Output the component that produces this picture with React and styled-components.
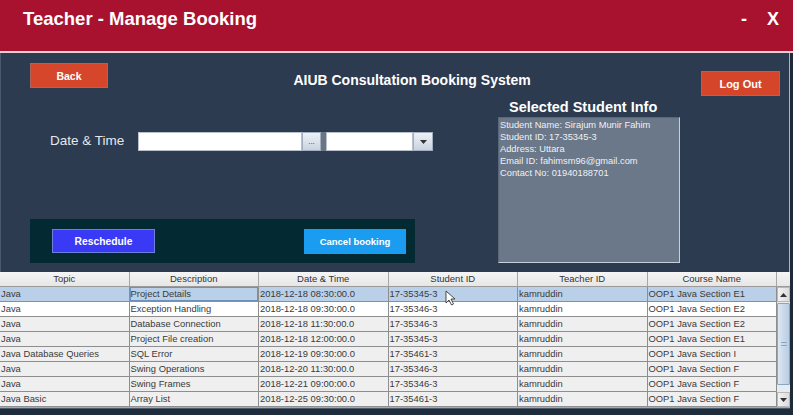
import styled, { createGlobalStyle } from 'styled-components'

const GlobalStyle = createGlobalStyle`
  html, body {
    margin: 0;
    padding: 0;
    background: #2c3b50;
  }
  * {
    box-sizing: border-box;
  }
`

/* --- Window frame --- */
const Frame = styled.div`
  width: 793px;
  height: 415px;
  display: flex;
  flex-direction: column;
  overflow: hidden;
  font-family: 'Liberation Sans', Arial, sans-serif;
  position: relative;
`

const TitleBar = styled.header`
  height: 53px;
  flex: none;
  display: flex;
  align-items: flex-start;
  justify-content: space-between;
  padding: 7px 14px 0 23px;
  background: #a8122f;
  border-bottom: 2px solid #e6cfd5;
  color: #ffffff;
`

const WindowTitle = styled.h1`
  margin: 0;
  font-size: 18.5px;
  font-weight: 700;
  line-height: 24px;
`

const WindowControls = styled.div`
  display: flex;
  gap: 20px;
  font-size: 18px;
  font-weight: 700;
  line-height: 24px;
`

const Body = styled.main`
  flex: 1;
  display: flex;
  flex-direction: column;
  background: #2c3b50;
  padding-right: 3px;
  box-shadow: inset -3px 0 0 #1f2a38, inset -4px 0 0 #a9b4c0, inset 1px 0 0 #4a5a6e;
`

/* --- Top row --- */
const TopRow = styled.div`
  display: flex;
  align-items: flex-start;
  padding: 10px 10px 0 30px;
  height: 44px;
`

const ActionButton = styled.button`
  width: ${(p) => p.$w}px;
  height: ${(p) => p.$h}px;
  margin-top: ${(p) => p.$top || 0}px;
  padding: 0;
  border: 1px solid ${(p) => p.$border};
  background: ${(p) => p.$bg};
  color: #ffffff;
  font-family: 'Liberation Sans', Arial, sans-serif;
  font-weight: 700;
  font-size: ${(p) => p.$size}px;
  cursor: pointer;
`

const AppHeading = styled.h2`
  flex: 1;
  margin: 0;
  margin-top: 8px;
  padding-left: 15px;
  text-align: center;
  color: #ffffff;
  font-size: 14px;
  font-weight: 700;
  line-height: 18px;
`

/* --- Middle area --- */
const MiddleRow = styled.div`
  display: flex;
  padding-left: 30px;
  height: 166px;
`

const LeftColumn = styled.div`
  width: 403px;
  display: flex;
  flex-direction: column;
`

const DateRow = styled.div`
  display: flex;
  align-items: center;
  margin-top: 35px;
  padding-left: 20px;
  height: 19px;
`

const FieldLabel = styled.label`
  width: 88px;
  margin-top: -2px;
  color: #e4e8ee;
  font-size: 13.5px;
`

const TextField = styled.div`
  width: ${(p) => p.$w}px;
  height: 19px;
  background: #ffffff;
  border: 1px solid #b8c0cc;
`

const FieldButton = styled.div`
  width: ${(p) => p.$w}px;
  height: 19px;
  display: flex;
  align-items: center;
  justify-content: center;
  background: linear-gradient(#eef2f7, #c9d3df);
  border: 1px solid #a3afbf;
  color: #333333;
  font-size: 8px;
  line-height: 1;
`

const FieldGap = styled.div`
  width: 5px;
  height: 19px;
  background: #6b7684;
`

const ActionBox = styled.div`
  margin-top: auto;
  width: 385px;
  height: 44px;
  display: flex;
  align-items: flex-start;
  justify-content: space-between;
  padding: 10px 9px 0 22px;
  background: #032a32;
`

const InfoColumn = styled.section`
  margin-left: 65px;
  width: 182px;
  display: flex;
  flex-direction: column;
`

const InfoHeading = styled.h3`
  margin: 0;
  padding-left: 11px;
  color: #ffffff;
  font-size: 14.5px;
  font-weight: 700;
  line-height: 20px;
`

const InfoBox = styled.div`
  flex: 1;
  background: #6a7889;
  border: 1px solid #5a6779;
  border-right-color: #c7d0da;
  border-bottom-color: #c7d0da;
  padding: 1px 1px;
  color: #eef1f5;
  font-size: 9.3px;
  line-height: 12px;
`

/* --- Table --- */
const TableArea = styled.div`
  display: flex;
  margin-top: 9px;
  border-bottom: 1px solid #a8a8a8;
`

const TableGrid = styled.div`
  width: 777px;
  display: grid;
  grid-template-columns: repeat(6, 1fr);
  grid-auto-rows: 15px;
`

const HeaderCell = styled.div`
  background: linear-gradient(#f5f5f5, #e6e6e6);
  border-right: 1px solid #a6a6a6;
  border-bottom: 1px solid #9a9a9a;
  text-align: center;
  color: #333333;
  font-size: 9.5px;
  line-height: 14px;
`

const Cell = styled.div`
  background: ${(p) => p.$bg};
  border-right: 1px solid #8e8e8e;
  border-bottom: 1px solid #8e8e8e;
  padding-left: 1px;
  color: #3a3a3a;
  font-size: 9.4px;
  line-height: 14px;
  white-space: nowrap;
  overflow: hidden;
  ${(p) => p.$focus && 'box-shadow: inset 0 0 0 1px #6f8fbf;'}
`

const ScrollColumn = styled.div`
  width: 13px;
  display: flex;
  flex-direction: column;
  background: #eeeeee;
`

const ScrollCorner = styled.div`
  height: 15px;
  background: linear-gradient(#f5f5f5, #e6e6e6);
  border-bottom: 1px solid #9a9a9a;
`

const ScrollArrow = styled.div`
  height: 15px;
  display: flex;
  align-items: center;
  justify-content: center;
  background: linear-gradient(90deg, #f2f2f2, #dcdcdc);
  border: 1px solid #b8b8b8;
`

const ScrollTrack = styled.div`
  flex: 1;
  display: flex;
  flex-direction: column;
  padding: 1px 0 7px;
  background: #e8ecf0;
`

const ScrollThumb = styled.div`
  flex: 1;
  display: flex;
  align-items: center;
  justify-content: center;
  background: linear-gradient(90deg, #dbe6f2, #b9cde3);
  border: 1px solid #8aa5c6;
  border-radius: 1px;
`

const Grip = styled.div`
  width: 6px;
  height: 4px;
  border-top: 1px solid #8aa5c6;
  border-bottom: 1px solid #8aa5c6;
`

const BottomStrip = styled.div`
  flex: 1;
  border-top: 1px solid #4b5a6c;
  background: #1f2c3b;
`

const Cursor = styled.svg`
  position: absolute;
  left: 445px;
  top: 290px;
  width: 11px;
  height: 16px;
`

const headers = ['Topic', 'Description', 'Date & Time', 'Student ID', 'Teacher ID', 'Course Name']

const bookings = [
  ['Java', 'Project Details', '2018-12-18 08:30:00.0', '17-35345-3', 'kamruddin', 'OOP1 Java Section E1'],
  ['Java', 'Exception Handling', '2018-12-18 09:30:00.0', '17-35346-3', 'kamruddin', 'OOP1 Java Section E2'],
  ['Java', 'Database Connection', '2018-12-18 11:30:00.0', '17-35346-3', 'kamruddin', 'OOP1 Java Section E2'],
  ['Java', 'Project File creation', '2018-12-18 12:00:00.0', '17-35345-3', 'kamruddin', 'OOP1 Java Section E1'],
  ['Java Database Queries', 'SQL Error', '2018-12-19 09:30:00.0', '17-35461-3', 'kamruddin', 'OOP1 Java Section I'],
  ['Java', 'Swing Operations', '2018-12-20 11:30:00.0', '17-35346-3', 'kamruddin', 'OOP1 Java Section F'],
  ['Java', 'Swing Frames', '2018-12-21 09:00:00.0', '17-35346-3', 'kamruddin', 'OOP1 Java Section F'],
  ['Java Basic', 'Array List', '2018-12-25 09:30:00.0', '17-35461-3', 'kamruddin', 'OOP1 Java Section F'],
]

const rowColor = (i) => (i === 0 ? '#b9d0e8' : i === 1 ? '#ffffff' : '#efefef')

const Triangle = ({ down }) => (
  <svg width="7" height="4" viewBox="0 0 7 4">
    <path d={down ? 'M0 0h7L3.5 4z' : 'M0 4h7L3.5 0z'} fill="#333" />
  </svg>
)

export default function App() {
  return (
    <Frame>
      <GlobalStyle />
      <TitleBar>
        <WindowTitle>Teacher - Manage Booking</WindowTitle>
        <WindowControls>
          <span>-</span>
          <span>X</span>
        </WindowControls>
      </TitleBar>

      <Body>
        <TopRow>
          <ActionButton $w={78} $h={25} $bg="#d5462a" $border="#a8675a" $size={10.5}>
            Back
          </ActionButton>
          <AppHeading>AIUB Consultation Booking System</AppHeading>
          <ActionButton $w={79} $h={25} $top={8} $bg="#d5452a" $border="#a8675a" $size={11}>
            Log Out
          </ActionButton>
        </TopRow>

        <MiddleRow>
          <LeftColumn>
            <DateRow>
              <FieldLabel>Date &amp; Time</FieldLabel>
              <TextField $w={164} />
              <FieldButton $w={19}>...</FieldButton>
              <FieldGap />
              <TextField $w={87} />
              <FieldButton $w={20}>
                <Triangle down />
              </FieldButton>
            </DateRow>

            <ActionBox>
              <ActionButton $w={103} $h={24} $bg="#3a3af6" $border="#6f7fd6" $size={10.3}>
                Reschedule
              </ActionButton>
              <ActionButton $w={102} $h={25} $bg="#1a9cf0" $border="#1a9cf0" $size={9.5}>
                Cancel booking
              </ActionButton>
            </ActionBox>
          </LeftColumn>

          <InfoColumn>
            <InfoHeading>Selected Student Info</InfoHeading>
            <InfoBox>
              Student Name: Sirajum Munir Fahim
              <br />
              Student ID: 17-35345-3
              <br />
              Address: Uttara
              <br />
              Email ID: fahimsm96@gmail.com
              <br />
              Contact No: 01940188701
            </InfoBox>
          </InfoColumn>
        </MiddleRow>

        <TableArea>
          <TableGrid>
            {headers.map((h) => (
              <HeaderCell key={h}>{h}</HeaderCell>
            ))}
            {bookings.map((row, i) =>
              row.map((value, j) => (
                <Cell key={`${i}-${j}`} $bg={rowColor(i)} $focus={i === 0 && j === 1}>
                  {value}
                </Cell>
              ))
            )}
          </TableGrid>
          <ScrollColumn>
            <ScrollCorner />
            <ScrollArrow>
              <Triangle />
            </ScrollArrow>
            <ScrollTrack>
              <ScrollThumb>
                <Grip />
              </ScrollThumb>
            </ScrollTrack>
            <ScrollArrow>
              <Triangle down />
            </ScrollArrow>
          </ScrollColumn>
        </TableArea>
        <BottomStrip />
      </Body>

      <Cursor viewBox="0 0 11 16">
        <path d="M1 1v12l3-3 2.5 5 2-1-2.5-5H10z" fill="#ffffff" stroke="#222" strokeWidth="0.8" />
      </Cursor>
    </Frame>
  )
}
